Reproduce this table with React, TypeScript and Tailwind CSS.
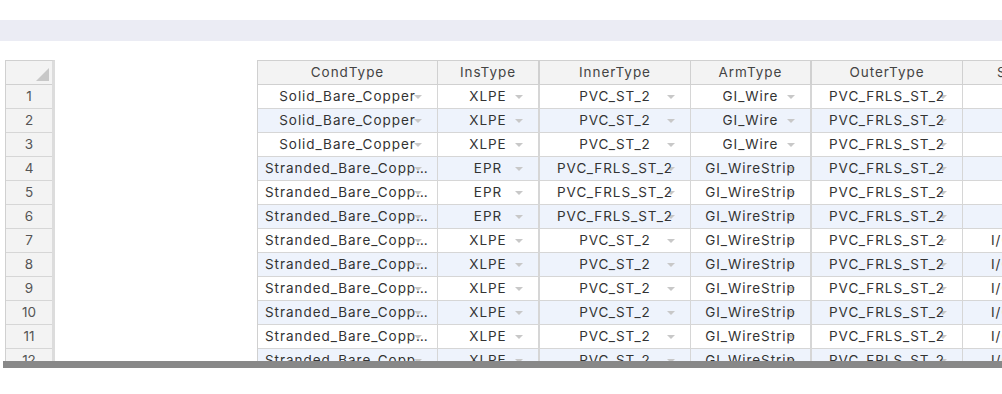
import React from "react";

type Row = {
  cond: string;
  ins: string;
  inner: string;
  arm: string;
  outer: string;
  last: string;
};

const solid: Row = {
  cond: "Solid_Bare_Copper",
  ins: "XLPE",
  inner: "PVC_ST_2",
  arm: "GI_Wire",
  outer: "PVC_FRLS_ST_2",
  last: "",
};

const epr: Row = {
  cond: "Stranded_Bare_Copper",
  ins: "EPR",
  inner: "PVC_FRLS_ST_2",
  arm: "GI_WireStrip",
  outer: "PVC_FRLS_ST_2",
  last: "",
};

const xlpe: Row = {
  cond: "Stranded_Bare_Copper",
  ins: "XLPE",
  inner: "PVC_ST_2",
  arm: "GI_WireStrip",
  outer: "PVC_FRLS_ST_2",
  last: "I/O_Screened",
};

const rows: Row[] = [solid, solid, solid, epr, epr, epr, xlpe, xlpe, xlpe, xlpe, xlpe, xlpe];

const font = { fontFamily: "Inter, 'Liberation Sans', sans-serif" };

function Arrow() {
  return (
    <span className="absolute right-[15px] top-1/2 -translate-y-1/2 w-0 h-0 border-l-[4px] border-r-[4px] border-t-[4px] border-l-transparent border-r-transparent border-t-[#c8c8c8]" />
  );
}

function Cell({ text, width, dropdown, bg }: { text: string; width: string; dropdown?: boolean; bg: string }) {
  return (
    <div className={`relative shrink-0 h-[24px] border-r border-b border-[#d6d6d6] ${width} ${bg}`}>
      {dropdown && <Arrow />}
      <div className="relative px-[7px] h-full flex items-center justify-center">
        <span className="block truncate text-center">{text}</span>
      </div>
    </div>
  );
}

function Head({ text, width }: { text: string; width: string }) {
  return (
    <div className={`shrink-0 h-[24px] flex items-center justify-center border-r border-b border-[#d0d0d0] bg-[#f3f3f3] text-[#444] ${width}`}>
      {text}
    </div>
  );
}

export default function App() {
  return (
    <div className="w-[1002px] h-[394px] bg-white overflow-hidden text-[13.5px] tracking-[0.95px] text-[#333]" style={font}>
      <div className="h-[20px]" />
      <div className="h-[21px] bg-[#ebecf4]" />
      <div className="h-[19px]" />

      <div className="h-[301px] overflow-hidden flex">
        {/* row numbers */}
        <div className="ml-[5px] w-[50px] shrink-0 border-l border-t border-[#d0d0d0] border-r-[3px] border-r-[#dcdcdc] bg-[#f3f3f3] text-[#555] tracking-normal">
          <div className="relative h-[24px] border-b border-[#d0d0d0]">
            <span className="absolute right-[3px] bottom-[3px] w-0 h-0" style={{ borderBottom: "13px solid #c8c8c8", borderLeft: "13px solid transparent" }} />
          </div>
          {rows.map((_, i) => (
            <div key={i} className="h-[24px] flex items-center justify-center border-b border-[#d6d6d6]">
              {i + 1}
            </div>
          ))}
        </div>

        <div className="w-[202px] shrink-0" />

        {/* data columns */}
        <div className="flex flex-col border-l border-t border-[#d0d0d0]">
          <div className="flex">
            <Head text="CondType" width="w-[180px]" />
            <Head text="InsType" width="w-[102px] border-r-[2px]" />
            <Head text="InnerType" width="w-[151px]" />
            <Head text="ArmType" width="w-[121px] border-r-[2px]" />
            <Head text="OuterType" width="w-[151px]" />
            <Head text="ScreenType" width="w-[154px]" />
          </div>
          {rows.map((r, i) => {
            const bg = i % 2 === 1 ? "bg-[#eef3fc]" : "bg-white";
            return (
              <div key={i} className="flex">
                <Cell text={r.cond} width="w-[180px]" dropdown bg={bg} />
                <Cell text={r.ins} width="w-[102px] border-r-[2px]" dropdown bg={bg} />
                <Cell text={r.inner} width="w-[151px]" dropdown bg={bg} />
                <Cell text={r.arm} width="w-[121px] border-r-[2px]" dropdown bg={bg} />
                <Cell text={r.outer} width="w-[151px]" dropdown bg={bg} />
                <Cell text={r.last} width="w-[154px]" bg={bg} />
              </div>
            );
          })}
        </div>
      </div>

      <div className="ml-[3px] h-[7px] bg-[#888888]" />
    </div>
  );
}
